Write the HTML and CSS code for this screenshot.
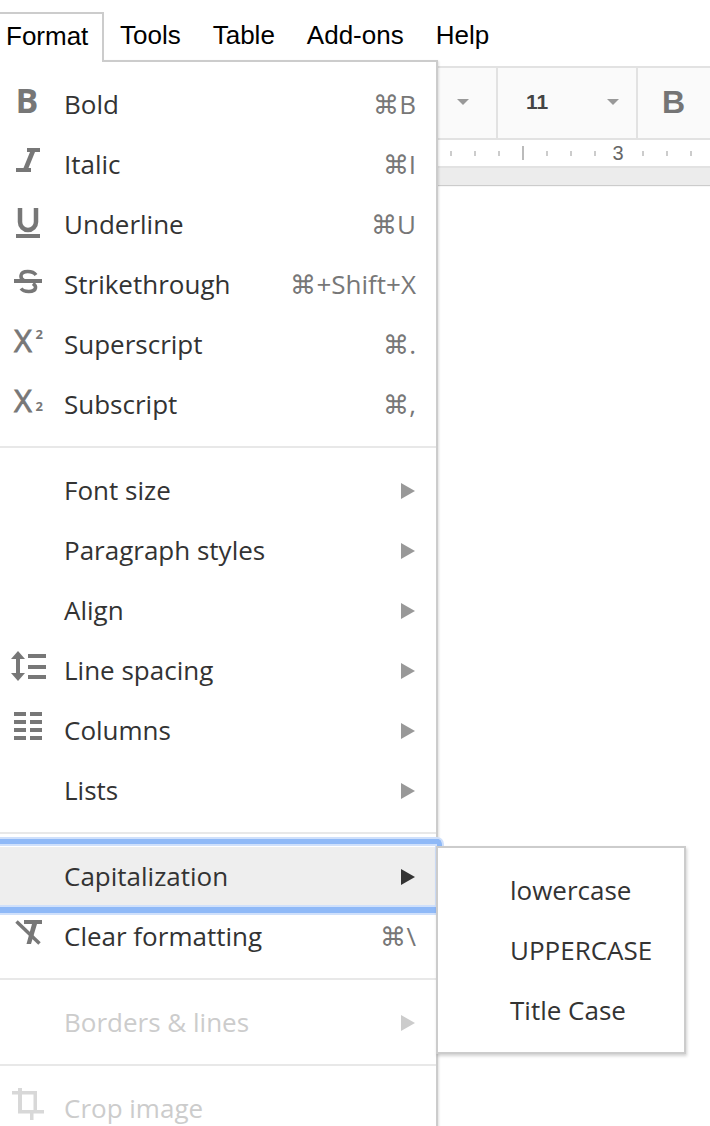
FILE: index.html
```html
<!DOCTYPE html>
<html lang="en">
<head>
<meta charset="utf-8">
<title>Format menu</title>
<link rel="stylesheet" href="styles.css">
</head>
<body>
<div class="app">
  <nav class="menubar">
    <div class="tab tab-open">Format</div>
    <div class="tab">Tools</div>
    <div class="tab">Table</div>
    <div class="tab">Add-ons</div>
    <div class="tab">Help</div>
  </nav>
  <div class="doc">
    <div class="toolbar">
      <div class="cell cell-style"><span class="caret"></span></div>
      <div class="cell cell-size"><span class="size">11</span><span class="caret"></span></div>
      <div class="cell cell-bold"><span class="tool-b">B</span></div>
    </div>
    <div class="ruler">
      <span class="mark"><i class="tick"></i></span><span class="mark"><i class="tick"></i></span><span class="mark"><i class="tick"></i></span>
      <span class="mark"><i class="tick tick-major"></i></span>
      <span class="mark"><i class="tick"></i></span><span class="mark"><i class="tick"></i></span><span class="mark"><i class="tick"></i></span>
      <span class="mark num">3</span>
      <span class="mark"><i class="tick"></i></span><span class="mark"><i class="tick"></i></span><span class="mark"><i class="tick"></i></span>
    </div>
    <div class="band"></div>
  </div>

  <div class="menu">
    <div class="row">
      <svg class="icon" viewBox="0 0 64 60"><text class="ig-b" x="15.500" y="38">B</text></svg>
      <span class="label">Bold</span><span class="short">⌘B</span>
    </div>
    <div class="row">
      <svg class="icon" viewBox="0 0 64 60"><path class="fill" d="M27 13H40V17H35L28.500 33H31V37H16V33H23.500L30 17H27Z"/></svg>
      <span class="label">Italic</span><span class="short">⌘I</span>
    </div>
    <div class="row">
      <svg class="icon" viewBox="0 0 64 60"><path class="line" d="M20 13V27a8 8 0 0 0 16 0V13"/><rect class="fill" x="16" y="39" width="24" height="4"/></svg>
      <span class="label">Underline</span><span class="short">⌘U</span>
    </div>
    <div class="row">
      <svg class="icon" viewBox="0 0 64 60"><path class="line-thin" d="M36 20C33 15.500 22 15 21 20.500C20.500 23 22 24.500 24 25.500M33 28.500C35 30 36 31 35.500 33C34.500 37.500 24 37.500 21 33.500"/><rect class="fill" x="14" y="24" width="28" height="4"/></svg>
      <span class="label">Strikethrough</span><span class="short">⌘+Shift+X</span>
    </div>
    <div class="row">
      <svg class="icon" viewBox="0 0 64 60"><text class="ig-x" x="14" y="37">X</text><text class="ig-s" x="35.500" y="24">2</text></svg>
      <span class="label">Superscript</span><span class="short">⌘.</span>
    </div>
    <div class="row">
      <svg class="icon" viewBox="0 0 64 60"><text class="ig-x" x="14" y="37">X</text><text class="ig-s" x="35.500" y="36">2</text></svg>
      <span class="label">Subscript</span><span class="short">⌘,</span>
    </div>
    <hr class="sep">
    <div class="row"><span class="icon"></span><span class="label">Font size</span><span class="arrow"></span></div>
    <div class="row"><span class="icon"></span><span class="label">Paragraph styles</span><span class="arrow"></span></div>
    <div class="row"><span class="icon"></span><span class="label">Align</span><span class="arrow"></span></div>
    <div class="row">
      <svg class="icon" viewBox="0 0 64 60"><path class="fill" d="M18 10L25 18H20V32H25L18 40L11 32H16V18H11Z"/><rect class="fill" x="28" y="13" width="18" height="4"/><rect class="fill" x="28" y="24" width="18" height="4"/><rect class="fill" x="28" y="34" width="18" height="4"/></svg>
      <span class="label">Line spacing</span><span class="arrow"></span>
    </div>
    <div class="row">
      <svg class="icon" viewBox="0 0 64 60"><path class="fill" d="M14 11h12v4H14ZM30 11h12v4H30ZM14 19h12v4H14ZM30 19h12v4H30ZM14 27h12v4H14ZM30 27h12v4H30ZM14 35h12v4H14ZM30 35h12v4H30Z"/></svg>
      <span class="label">Columns</span><span class="arrow"></span>
    </div>
    <div class="row"><span class="icon"></span><span class="label">Lists</span><span class="arrow"></span></div>
    <hr class="sep">
    <div class="row row-active">
      <span class="icon"></span><span class="label">Capitalization</span><span class="arrow"></span>
      <div class="submenu">
        <div class="subrow">lowercase</div>
        <div class="subrow">UPPERCASE</div>
        <div class="subrow">Title Case</div>
      </div>
    </div>
    <div class="row">
      <svg class="icon" viewBox="0 0 64 60"><path class="fill" d="M24 13H42V17H37L31 37H26.500L32 17H24Z"/><path class="line-thin" d="M16.500 14.500L39.500 36.500"/></svg>
      <span class="label">Clear formatting</span><span class="short">⌘\</span>
    </div>
    <hr class="sep">
    <div class="row row-disabled"><span class="icon"></span><span class="label">Borders &amp; lines</span><span class="arrow"></span></div>
    <hr class="sep">
    <div class="row row-disabled">
      <svg class="icon" viewBox="0 0 64 60"><path class="fill-off" d="M18 9H22V31H37V34.500H33.500V41H30V34.500H18V15.500H12V12H18ZM22 12H37V31H33.500V15.500H22ZM37 31H44V34.500H37Z"/></svg>
      <span class="label">Crop image</span>
    </div>
  </div>
</div>
</body>
</html>
```

FILE: styles.css
```css
* { box-sizing: border-box; }
html, body { margin: 0; padding: 0; background: #fff; }
.app {
  position: relative;
  width: 710px;
  height: 1126px;
  overflow: hidden;
  font-family: "Open Sans", sans-serif;
}

/* menu bar */
.menubar {
  display: flex;
  align-items: flex-end;
  height: 61px;
  font-family: "Liberation Sans", Arial, sans-serif;
  font-size: 26px;
  color: #000;
}
.tab {
  height: 49px;
  padding: 7px 16px 0;
  line-height: 32px;
}
.tab-open {
  position: relative;
  z-index: 5;
  width: 104px;
  height: 50px;
  margin-bottom: -1px;
  padding: 6px 0 0 6px;
  background: #fff;
  border-top: 2px solid #ccc;
  border-right: 2px solid #ccc;
}

/* document behind the menu */
.doc { margin-top: 5px; }
.toolbar {
  display: flex;
  height: 74px;
  padding-left: 437px;
  background: #fafafa;
  border-top: 2px solid #e2e2e2;
  border-bottom: 2px solid #e2e2e2;
}
.cell {
  display: flex;
  align-items: center;
  flex: none;
  padding-bottom: 2px;
  border-right: 2px solid #e2e2e2;
}
.cell-style { width: 61px; padding-left: 20px; }
.cell-size { width: 140px; padding-left: 28px; }
.cell-bold { flex: 1; border-right: 0; padding-left: 24px; }
.caret {
  width: 0;
  height: 0;
  border-left: 6px solid transparent;
  border-right: 6px solid transparent;
  border-top: 6px solid #999;
}
.size {
  width: 81px;
  font: bold 21px "Liberation Sans", Arial, sans-serif;
  color: #444;
}
.tool-b {
  font: bold 32px "Liberation Sans", Arial, sans-serif;
  color: #757575;
}
.ruler {
  display: flex;
  align-items: center;
  height: 26px;
  padding-left: 439px;
}
.mark {
  display: flex;
  justify-content: center;
  align-items: center;
  flex: none;
  width: 24px;
}
.tick { width: 2px; height: 5px; background: #ccc; }
.tick-major { height: 14px; background: #bbb; }
.num {
  padding-right: 2px;
  font: 20px "Liberation Sans", Arial, sans-serif;
  color: #666;
}
.band {
  height: 19px;
  background: #ececec;
  border-top: 2px solid #e2e2e2;
  box-shadow: 0 1px 1px #ccc;
}

/* format menu */
.menu {
  position: absolute;
  top: 60px;
  left: 0;
  z-index: 3;
  width: 438px;
  height: 1100px;
  padding-top: 13px;
  background: #fff;
  border-top: 2px solid #ccc;
  border-right: 2px solid #ccc;
  box-shadow: 1px 1px 2px rgba(0, 0, 0, .12);
}
.row {
  position: relative;
  display: flex;
  align-items: center;
  height: 60px;
  padding-right: 20px;
  font-size: 26px;
  color: #333;
}
.icon { display: block; flex: none; width: 64px; height: 60px; }
.label { flex: 1; margin-bottom: 2px; }
.short { margin-bottom: 2px; color: #777; }
.arrow {
  flex: none;
  margin-right: 1px;
  width: 0;
  height: 0;
  border-top: 8px solid transparent;
  border-bottom: 8px solid transparent;
  border-left: 14px solid #999;
}
.sep {
  height: 2px;
  margin: 11px 0 13px;
  border: 0;
  background: #e8e8e8;
}
.fill { fill: #777; }
.fill-off { fill: #d8d8d8; }
.line { fill: none; stroke: #777; stroke-width: 4.500; }
.line-thin { fill: none; stroke: #777; stroke-width: 3.500; }
.ig-b { font: bold 34px "Open Sans", sans-serif; fill: #777; }
.ig-x { font: 31px "Open Sans", sans-serif; fill: #777; stroke: #777; stroke-width: .8px; }
.ig-s { font: bold 13px "Open Sans", sans-serif; fill: #777; }

.row-active { background: #eee; }
.row-active .arrow { border-left-color: #333; }
.row-active::before {
  content: "";
  position: absolute;
  top: -8px;
  right: -6px;
  bottom: -6px;
  left: -10px;
  border-radius: 5px;
  border-top: 5px solid #8fb9f7;
  border-right: 5px solid #8fb9f7;
  border-bottom: 6px solid #8fb9f7;
  box-shadow: 0 0 0 2px #cfe0fb, inset 0 0 0 2px #cfe0fb;
}
.row-disabled { color: #ccc; }
.row-disabled .arrow { border-left-color: #ccc; }

.submenu {
  position: absolute;
  top: -1px;
  left: 436px;
  z-index: 4;
  width: 250px;
  height: 208px;
  padding-top: 12px;
  background: #fff;
  border: 2px solid #ccc;
  box-shadow: 1px 2px 3px rgba(0, 0, 0, .18);
}
.subrow {
  display: flex;
  align-items: center;
  height: 60px;
  padding-left: 72px;
}
```
